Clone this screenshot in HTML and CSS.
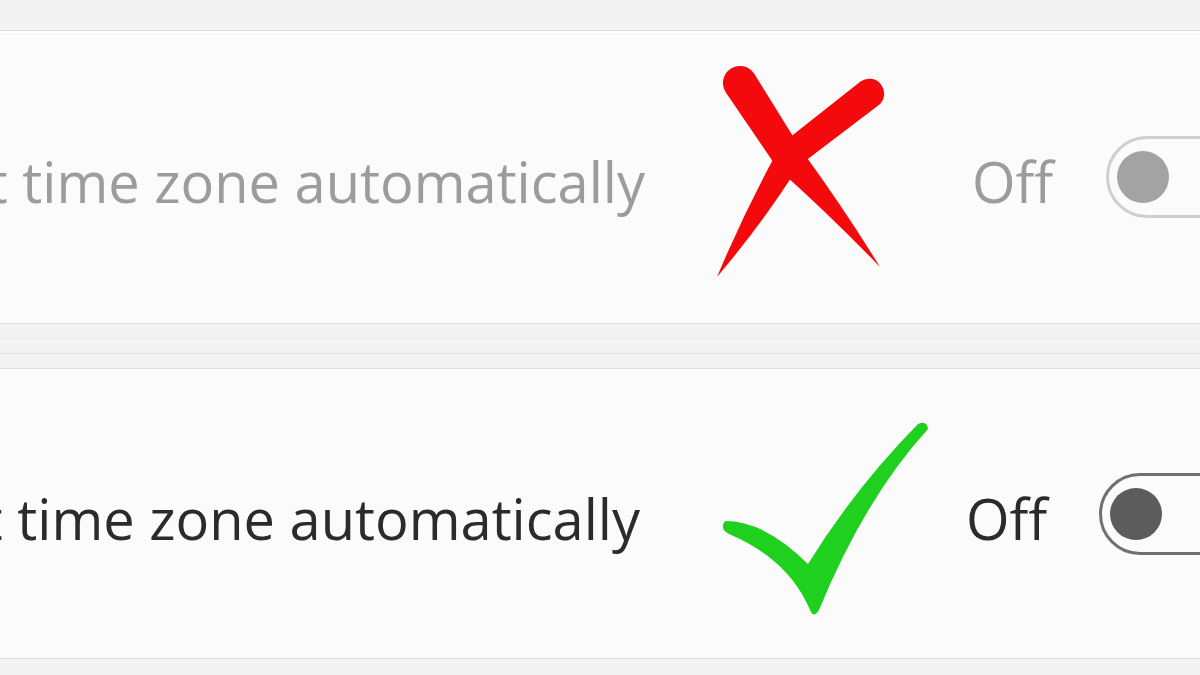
FILE: index.html
```html
<!DOCTYPE html>
<html lang="en">
<head>
    <meta charset="UTF-8">
    <title>Set time zone automatically</title>
    <link rel="stylesheet" href="styles.css">
</head>
<body>
    <div class="list">
        <div class="card card-bad">
            <div class="label-box">
                <span class="label">Set time zone automatically</span>
            </div>
            <svg class="mark mark-x" width="180" height="220" viewBox="0 0 180 220">
                <path d="M 44.3 13.7 L 92.6 91.8 Q 135 150 170 207 Q 120 155 67.4 108.2 L 15.7 32.3 A 17 17 0 0 1 44.3 13.7 Z" fill="#f40a0d"/>
                <path d="M 150.8 21.2 L 71.4 83.9 Q 35 150 7 217 Q 55 160 88.6 106.1 L 169.2 44.8 A 15 15 0 0 0 150.8 21.2 Z" fill="#f40a0d"/>
            </svg>
            <span class="state">Off</span>
            <div class="toggle"><div class="knob"></div></div>
        </div>

        <div class="divider"></div>

        <div class="card card-good">
            <div class="label-box">
                <span class="label">Set time zone automatically</span>
            </div>
            <svg class="mark mark-check" width="220" height="205" viewBox="0 0 220 205">
                <path d="M 10 105 Q 50 105 93 148 Q 140 72 203 8 Q 212 4 213 13 Q 150 82 104 194 Q 99 202 96 196 C 85 170 65 140 14 118 Q 4 113 10 105 Z" fill="#1fd01f"/>
            </svg>
            <span class="state">Off</span>
            <div class="toggle"><div class="knob"></div></div>
        </div>
    </div>
</body>
</html>
```

FILE: styles.css
```css
body {
    margin: 0;
    height: 675px;
    overflow: hidden;
    background-color: #f3f3f3;
    font-family: "Open Sans", "Noto Sans", sans-serif;
}
.list {
    padding-top: 30px;
}
.card {
    display: flex;
    align-items: center;
    height: 292px;
    border-top: 1px solid #dcdcdc;
    border-bottom: 1px solid #dcdcdc;
    background-color: #fbfbfb;
    box-shadow: inset 0 2px 0 #ffffff;
}
.card-good {
    height: 289px;
}
.divider {
    height: 14px;
    margin: 14px 0;
    border-top: 1px solid #e9e9e9;
    border-bottom: 1px solid #e2e2e2;
}
.label-box {
    flex: none;
    display: flex;
    justify-content: flex-end;
    width: 645px;
}
.label {
    white-space: nowrap;
    font-size: 56px;
    padding-top: 8px;
}
.state {
    flex: none;
    font-size: 56px;
    padding-top: 8px;
}
.mark {
    flex: none;
    display: block;
}
.toggle {
    flex: none;
    display: flex;
    align-items: center;
    width: 180px;
    height: 76px;
    padding-left: 8px;
    border: 3px solid;
    border-radius: 41px;
}
.knob {
    width: 52px;
    height: 52px;
    border-radius: 50%;
}

/* disabled look */
.card-bad .label,
.card-bad .state {
    color: #9c9c9c;
}
.card-bad .mark-x {
    margin-left: 65px;
    margin-top: -14px;
}
.card-bad .state {
    margin-left: 82px;
}
.card-bad .toggle {
    margin-left: 53px;
    border-color: #cfcfcf;
}
.card-bad .knob {
    background-color: #a3a3a3;
}

/* enabled look */
.card-good .label-box {
    width: 640px;
}
.card-good .label,
.card-good .state {
    color: #2b2b2b;
}
.card-good .mark-check {
    margin-left: 75px;
    margin-top: 10px;
}
.card-good .state {
    margin-left: 31px;
}
.card-good .toggle {
    margin-left: 52px;
    border-color: #707070;
}
.card-good .knob {
    background-color: #5c5c5c;
}
```
